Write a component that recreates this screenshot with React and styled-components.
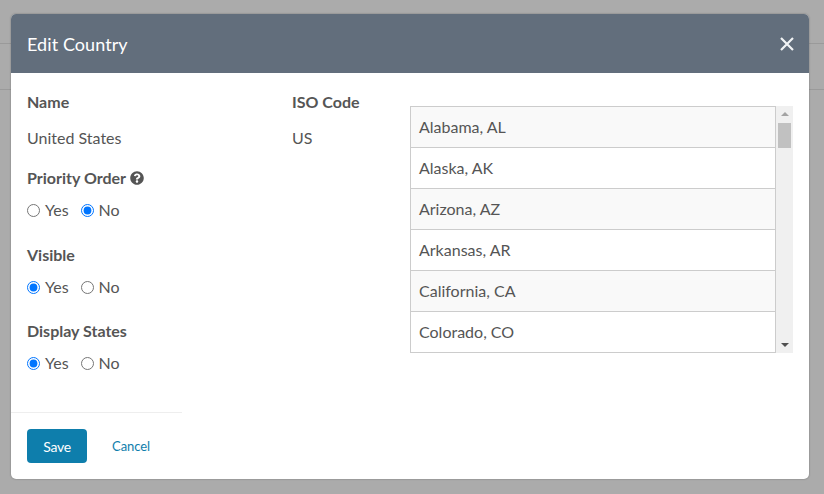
import React from "react";
import styled, { createGlobalStyle } from "styled-components";

const Global = createGlobalStyle`
  html, body { margin: 0; padding: 0; }
  body { width: 824px; height: 494px; overflow: hidden; background: #fff; font-family: Lato, "Liberation Sans", sans-serif; }
`;
const Page = styled.div`position: relative; width: 824px; height: 494px; overflow: hidden; background: #fff;`;
const BgRow = styled.div`height: ${p => p.$h}px; box-sizing: border-box; border-bottom: 1px solid #e6e6e6;`;
const Backdrop = styled.div`position: absolute; inset: 0; background: rgba(0,0,0,.33); display: flex; align-items: flex-start; justify-content: center; padding: 14px 4px 0 0;`;
const Dialog = styled.div`width: 798px; height: 465px; background: #fff; border-radius: 5px; overflow: hidden; display: flex; flex-direction: column; box-shadow: 0 0 2px rgba(0,0,0,.35);`;
const Header = styled.div`height: 59px; flex: none; background: #626e7c; display: flex; align-items: center; justify-content: space-between; padding: 0 14px 0 16px; color: #fff;`;
const Title = styled.h2`margin: 0; font-size: 18px; font-weight: 400; line-height: 24px; letter-spacing: 0.08px;`;
const Close = styled.button`border: 0; padding: 0; background: none; display: flex; width: 16px; height: 16px; color: #f1f3f5;`;
const Body = styled.div`flex: 1; display: flex; min-height: 0;`;
const Left = styled.div`width: 171px; flex: none; display: flex; flex-direction: column;`;
const Form = styled.div`flex: 1; padding: 19px 0 0 16px;`;
const Label = styled.div`font-size: 16px; font-weight: 700; color: #555; line-height: 20px; display: flex; align-items: center; gap: 4px; white-space: nowrap;`;
const Value = styled.div`font-size: 16px; color: #555; line-height: 20px; margin-top: 16px; margin-bottom: 20px;`;
const Radios = styled.div`display: flex; gap: 12px; margin-top: 12px; margin-bottom: ${p => p.$tight ? 24 : 25}px; height: 20px;`;
const RadioLabel = styled.label`display: flex; align-items: center; gap: 5px; font-size: 16px; line-height: 20px; color: #555;`;
const Radio = styled.input`appearance: auto; margin: 0; width: 13px; height: 13px; accent-color: #0075ff;`;
const Footer = styled.div`height: 67px; flex: none; box-sizing: border-box; border-top: 1px solid #eee; display: flex; align-items: flex-start; padding: 16px 0 0 16px;`;
const Save = styled.button`width: 60px; height: 34px; border: 0; border-radius: 4px; background: #0e7eac; color: #fff; font: 400 14px Lato, sans-serif; letter-spacing: -0.3px;`;
const Cancel = styled.a`margin-left: 25px; line-height: 34px; font-size: 13px; color: #0e7eac; letter-spacing: -0.05px;`;
const IsoCol = styled.div`width: 118px; margin-left: 110px; flex: none; padding-top: 19px;`;
const ListWrap = styled.div`display: flex; margin-top: 33px; height: 247px; align-self: flex-start;`;
const List = styled.ul`list-style: none; margin: 0; padding: 0; width: 366px; box-sizing: border-box; border: 1px solid #ccc; overflow: hidden;`;
const Item = styled.li`height: 41px; box-sizing: border-box; padding: 0 0 2px 8px; display: flex; align-items: center; font-size: 16px; color: #555; border-top: ${p => p.$first ? 0 : 1}px solid #ccc; background: ${p => p.$odd ? "#f9f9f9" : "#fff"}; &:first-child { height: 40px; }`;
const Scrollbar = styled.div`width: 17px; background: #f0f0f0; display: flex; flex-direction: column; align-items: center;`;
const ArrowUp = styled.div`width: 0; height: 0; margin-top: 6px; border: 4px solid transparent; border-top: 0; border-bottom: 4px solid #a3a3a3;`;
const Thumb = styled.div`width: 13px; height: 25px; margin-top: 7px; background: #c1c1c1;`;
const ArrowDown = styled.div`width: 0; height: 0; margin-top: auto; margin-bottom: 6px; border: 4px solid transparent; border-bottom: 0; border-top: 4px solid #505050;`;

const Group = ({ name, yes, tight }) => (
  <Radios $tight={tight}>
    <RadioLabel><Radio type="radio" name={name} defaultChecked={yes} />Yes</RadioLabel>
    <RadioLabel><Radio type="radio" name={name} defaultChecked={!yes} />No</RadioLabel>
  </Radios>
);
const Help = () => (
  <svg width="14" height="14" viewBox="0 0 512 512" fill="#555"><path d="M504 256c0 137-111 248-248 248S8 393 8 256 119 8 256 8s248 111 248 248zM262.700 90c-54.500 0-89.300 23-116.500 63.800-3.500 5.300-2.400 12.400 2.700 16.300l34.700 26.300c5.200 3.900 12.600 3 16.700-2.100 17.900-22.700 30.100-35.800 57.300-35.800 20.400 0 45.700 13.100 45.700 32.900 0 15-12.400 22.700-32.600 34-23.600 13.200-54.800 29.700-54.800 70.900V300c0 6.600 5.400 12 12 12h56c6.600 0 12-5.400 12-12v-1.300c0-28.600 83.500-29.800 83.500-107.100C379.500 133.400 319.200 90 262.700 90zM256 339c-25.500 0-46.200 20.700-46.200 46.200 0 25.500 20.700 46.200 46.200 46.200s46.200-20.700 46.200-46.200c0-25.500-20.700-46.200-46.200-46.200z"/></svg>
);
const states = ["Alabama, AL", "Alaska, AK", "Arizona, AZ", "Arkansas, AR", "California, CA", "Colorado, CO"];

export default function App() {
  return (
    <Page>
      <Global />
      <BgRow $h={44} />
      <BgRow $h={46} />
      <Backdrop>
        <Dialog>
          <Header>
            <Title>Edit Country</Title>
            <Close aria-label="Close">
              <svg width="16" height="16" viewBox="0 0 16 16" stroke="currentColor" strokeWidth="2.2" fill="none"><path d="M2 2l12 12M14 2L2 14" /></svg>
            </Close>
          </Header>
          <Body>
            <Left>
              <Form>
                <Label>Name</Label>
                <Value>United States</Value>
                <Label>Priority Order<Help /></Label>
                <Group name="priority" yes={false} />
                <Label>Visible</Label>
                <Group name="visible" yes tight />
                <Label>Display States</Label>
                <Group name="states" yes />
              </Form>
              <Footer>
                <Save>Save</Save>
                <Cancel>Cancel</Cancel>
              </Footer>
            </Left>
            <IsoCol>
              <Label>ISO Code</Label>
              <Value>US</Value>
            </IsoCol>
            <ListWrap>
              <List>
                {states.map((s, i) => <Item key={s} $first={i === 0} $odd={i % 2 === 0}>{s}</Item>)}
              </List>
              <Scrollbar><ArrowUp /><Thumb /><ArrowDown /></Scrollbar>
            </ListWrap>
          </Body>
        </Dialog>
      </Backdrop>
    </Page>
  );
}
